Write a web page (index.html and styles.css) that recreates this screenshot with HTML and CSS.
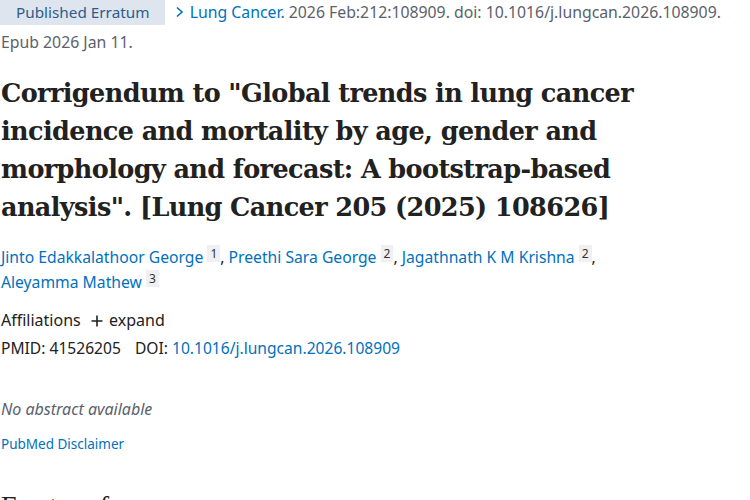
FILE: index.html
```html
<!DOCTYPE html>
<html lang="en">
<head>
    <meta charset="UTF-8">
    <meta name="viewport" content="width=device-width, initial-scale=1.0">
    <title>Corrigendum - PubMed</title>
    <link rel="stylesheet" href="styles.css">
</head>
<body>
    <main class="article">
        <div class="citation">
            <span class="pub-type">Published Erratum</span>
            <span class="chevron">
                <svg width="10" height="12" viewBox="0 0 10 12"><path d="M2 1.5 L7 6 L2 10.5" fill="none" stroke="currentColor" stroke-width="1.6"/></svg>
            </span>
            <a class="journal" href="#">Lung Cancer.</a>
            <span class="cit">2026 Feb:212:108909. doi: 10.1016/j.lungcan.2026.108909.</span>
            <span class="cit">Epub 2026 Jan 11.</span>
        </div>

        <h1 class="title">Corrigendum to "Global trends in lung cancer incidence and mortality by age, gender and morphology and forecast: A bootstrap-based analysis". [Lung Cancer 205 (2025) 108626]</h1>

        <div class="authors">
            <span class="author"><a href="#">Jinto Edakkalathoor George</a> <sup>1</sup>,</span>
            <span class="author"><a href="#">Preethi Sara George</a> <sup>2</sup>,</span>
            <span class="author"><a href="#">Jagathnath K M Krishna</a> <sup>2</sup>,</span>
            <span class="author"><a href="#">Aleyamma Mathew</a> <sup>3</sup></span>
        </div>

        <div class="affiliations">
            Affiliations
            <span class="expand">
                <svg width="12" height="12" viewBox="0 0 12 12"><path d="M6 0.5 V11.5 M0.5 6 H11.5" stroke="currentColor" stroke-width="1.6"/></svg>
                expand
            </span>
        </div>

        <div class="identifiers">
            <span>PMID: 41526205</span>
            <span>DOI: <a href="#">10.1016/j.lungcan.2026.108909</a></span>
        </div>

        <p class="no-abstract">No abstract available</p>

        <a class="disclaimer" href="#">PubMed Disclaimer</a>

        <h2 class="section-title">Erratum for</h2>
    </main>
</body>
</html>
```

FILE: styles.css
```css
body {
    margin: 0;
    padding: 0 0 0 1px;
    font-family: "Noto Sans", "Open Sans", sans-serif;
    color: #212121;
    background: #fff;
}
a {
    color: #0071bc;
    text-decoration: none;
}
.article {
    width: 740px;
}
.citation {
    font-size: 15.8px;
    line-height: 30px;
    color: #5b616b;
    margin-top: -3px;
}
.pub-type {
    display: inline-block;
    margin-left: -1px;
    padding: 0 15px 0 16px;
    background-color: #dfe5ee;
    color: #2c5d8a;
    font-size: 15.3px;
    line-height: 25px;
    margin-right: 6px;
}
.chevron {
    color: #0071bc;
    margin-right: 1px;
}
.title {
    font-family: "DejaVu Serif", serif;
    font-size: 25.5px;
    line-height: 38px;
    font-weight: bold;
    color: #212121;
    margin: 17px 0 19px;
    letter-spacing: -0.6px;
}
.authors {
    font-size: 15.7px;
    line-height: 25px;
    color: #212121;
    width: 720px;
}
.author {
    white-space: nowrap;
}
.authors sup {
    font-size: 12px;
    background: #f0f0f0;
    color: #333;
    padding: 0 3px;
    vertical-align: 5px;
    line-height: 1;
}
.affiliations {
    font-size: 16px;
    margin-top: 12px;
    line-height: 26px;
}
.expand {
    margin-left: 6px;
}
.expand svg {
    vertical-align: -1px;
    margin-right: 2px;
}
.identifiers {
    font-size: 15.6px;
    line-height: 26px;
    margin-top: 2px;
}
.identifiers span + span {
    margin-left: 10px;
}
.no-abstract {
    font-style: italic;
    color: #5b616b;
    font-size: 16px;
    margin: 37px 0 12px;
}
.disclaimer {
    font-size: 13.5px;
}
.section-title {
    font-family: "Liberation Serif", serif;
    font-weight: normal;
    font-size: 28px;
    margin: 36px 0 0;
}
```
